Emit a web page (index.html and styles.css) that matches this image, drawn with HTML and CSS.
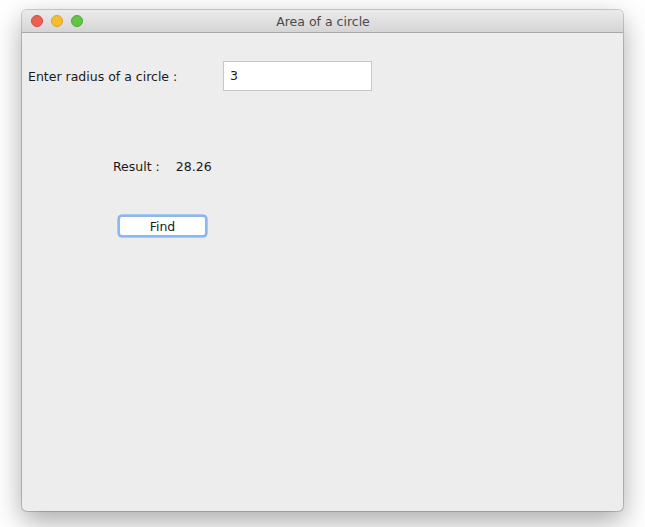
FILE: index.html
```html
<!DOCTYPE html>
<html>
<head>
<meta charset="utf-8">
<link rel="stylesheet" href="styles.css">
</head>
<body>
<div class="window">
  <div class="titlebar">
    <div class="lights">
      <span class="light red"></span>
      <span class="light yellow"></span>
      <span class="light green"></span>
    </div>
    <div class="title">Area of a circle</div>
  </div>
  <div class="content">
    <div class="row-input">
      <span class="label">Enter radius of a circle :</span>
      <div class="field">3</div>
    </div>
    <div class="row-result">
      <span class="label">Result :</span>
      <span class="value">28.26</span>
    </div>
    <div class="row-button">
      <button class="btn">Find</button>
    </div>
  </div>
</div>
</body>
</html>
```
FILE: styles.css
```css
html, body {
  margin: 0;
  padding: 0;
  background: #ffffff;
  width: 645px;
  height: 527px;
  overflow: hidden;
  font-family: "DejaVu Sans", "Noto Sans", sans-serif;
}
body {
  padding: 10px 0 0 22px;
  box-sizing: border-box;
}
.window {
  width: 601px;
  height: 501px;
  background: #ededed;
  border-radius: 5px;
  box-shadow: 0 0 0 1px rgba(0,0,0,0.18), 0 10px 28px rgba(0,0,0,0.35);
  display: flex;
  flex-direction: column;
  overflow: hidden;
}
.titlebar {
  height: 22px;
  flex: none;
  background: linear-gradient(#ebebeb, #d5d5d5);
  border-bottom: 1px solid #a9a9a9;
  position: relative;
  display: flex;
  align-items: center;
  justify-content: center;
}
.lights {
  position: absolute;
  left: 9px;
  top: 5px;
  display: flex;
  gap: 8px;
}
.light {
  width: 12px;
  height: 12px;
  border-radius: 50%;
  box-sizing: border-box;
}
.red { background: #ed5e55; border: 1px solid #d5493f; }
.yellow { background: #f5bd30; border: 1px solid #dca128; }
.green { background: #62c443; border: 1px solid #4fa834; }
.title {
  font-size: 12.5px;
  color: #4a4a4a;
  margin-left: 1px;
}
.content {
  flex: 1;
  font-size: 12.5px;
  color: #1a1a1a;
}
.row-input {
  display: flex;
  align-items: center;
  margin-top: 28px;
  padding-left: 6px;
}
.row-input .label {
  width: 195px;
}
.field {
  width: 149px;
  height: 30px;
  box-sizing: border-box;
  background: #ffffff;
  border: 1px solid #c8c8c8;
  padding: 6px 0 0 6px;
  font-size: 12.5px;
}
.row-result {
  display: flex;
  margin-top: 68px;
  padding-left: 91px;
}
.row-result .value {
  margin-left: 16px;
}
.row-button {
  margin-top: 41px;
  padding-left: 96px;
}
.btn {
  width: 89px;
  height: 22px;
  font-family: inherit;
  font-size: 12.5px;
  color: #1a1a1a;
  background: #ffffff;
  border: 2px solid #8ab8f2;
  border-radius: 4px;
  padding: 0;
  box-shadow: 0 0 0 0.5px #6fa3ea;
}
```
